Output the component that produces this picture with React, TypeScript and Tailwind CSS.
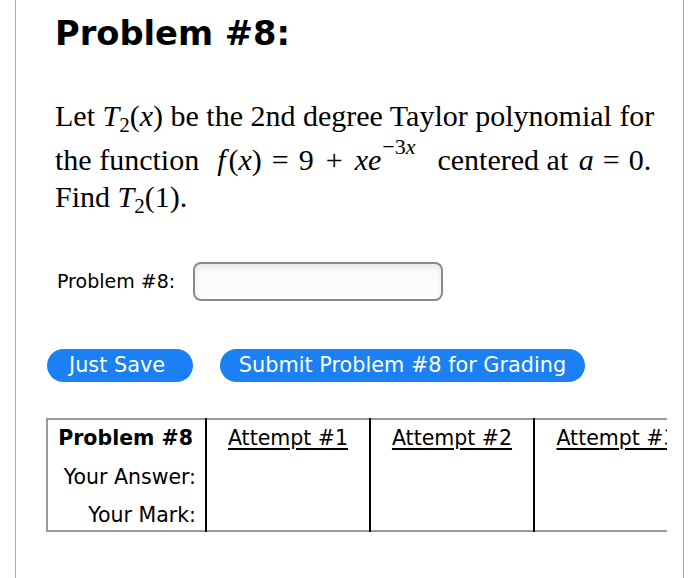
import React from "react";

const sans = "font-['DejaVu_Sans',Verdana,sans-serif]";
const serif = "font-['Liberation_Serif','Times_New_Roman',serif]";

function Sub({ children }: { children: React.ReactNode }) {
  return <span className="align-[-6px] text-[21px] leading-none">{children}</span>;
}

function ProblemText() {
  return (
    <div className={`${serif} mt-[43px] pl-[9px] text-[30px] leading-[38px] text-black`}>
      <div className="h-[38px] whitespace-nowrap">
        Let <i>T</i>
        <Sub>2</Sub>(<i>x</i>) be the 2nd degree Taylor polynomial for
      </div>
      <div className="mt-[1px] h-[42px] whitespace-nowrap">
        the function
        <span className="ml-[18px]">
          <i className="mr-[3px]">f</i>(<i>x</i>)
        </span>
        <span className="mx-[10px]">=</span>9<span className="mx-[12px]">+</span>
        <i>xe</i>
        <span className="ml-[1px] align-[16px] text-[22px] leading-none">
          −3<i>x</i>
        </span>
        <span className="ml-[22px]">centered at </span>
        <i className="ml-[3px]">a</i>
        <span className="mx-[9px]">=</span>0.
      </div>
      <div className="h-[38px] whitespace-nowrap">
        Find <i>T</i>
        <Sub>2</Sub>(1).
      </div>
    </div>
  );
}

function AttemptTable() {
  const cols = ["Attempt #1", "Attempt #2", "Attempt #3"];
  return (
    <div className="mt-[36px] w-[621px] overflow-hidden">
      <table className={`${sans} w-[651px] table-fixed border-collapse text-[20.5px] text-black`}>
        <colgroup>
          <col className="w-[159px]" />
          <col className="w-[164px]" />
          <col className="w-[164px]" />
          <col className="w-[164px]" />
        </colgroup>
        <tbody>
          <tr className="h-[38px] border-t-2 border-[#9a9a9a]">
            <td className="border-l-2 border-[#9a9a9a] pr-[12px] text-right font-bold">Problem #8</td>
            {cols.map((c) => (
              <td key={c} className="border-l-2 border-l-black text-center">
                <span className="underline underline-offset-[3px]">{c}</span>
              </td>
            ))}
          </tr>
          <tr className="h-[40px]">
            <td className="border-l-2 border-[#9a9a9a] pr-[9px] text-right">Your Answer:</td>
            {cols.map((c) => (
              <td key={c} className="border-l-2 border-l-black" />
            ))}
          </tr>
          <tr className="h-[34px] border-b-2 border-[#9a9a9a]">
            <td className="border-l-2 border-[#9a9a9a] pr-[9px] pt-[3px] text-right leading-[28px]">Your Mark:</td>
            {cols.map((c) => (
              <td key={c} className="border-l-2 border-l-black" />
            ))}
          </tr>
        </tbody>
      </table>
    </div>
  );
}

export default function App() {
  return (
    <div className="h-[578px] w-[700px] overflow-hidden bg-white">
      <div className="ml-[15px] min-h-[578px] w-[669px] border-x border-[#a8a8a8] pl-[30px] pr-[17px] pt-[14px]">
        <h1 className={`${sans} pl-[9px] text-[33.7px] font-bold leading-[40px] text-black`}>Problem #8:</h1>

        <ProblemText />

        <div className="mt-[46px] flex items-center">
          <label htmlFor="answer" className={`${sans} ml-[11px] text-[19px] text-black`}>
            Problem #8:
          </label>
          <input
            id="answer"
            type="text"
            className="ml-[18px] h-[39px] w-[250px] rounded-[8px] border-2 border-[#8a8a8a] bg-[#fcfcfd] shadow-[inset_0_4px_6px_rgba(0,0,0,0.08)] outline-none"
          />
        </div>

        <div className={`${sans} mt-[48px] flex items-center gap-[27px] pl-[1px]`}>
          <button className="h-[33px] w-[146px] rounded-full bg-[#1a80f3] pr-[6px] text-[20.8px] leading-none text-white">
            Just Save
          </button>
          <button className="h-[33px] w-[365px] rounded-full bg-[#1a80f3] text-[20.8px] leading-none text-white">
            Submit Problem #8 for Grading
          </button>
        </div>

        <AttemptTable />
      </div>
    </div>
  );
}
